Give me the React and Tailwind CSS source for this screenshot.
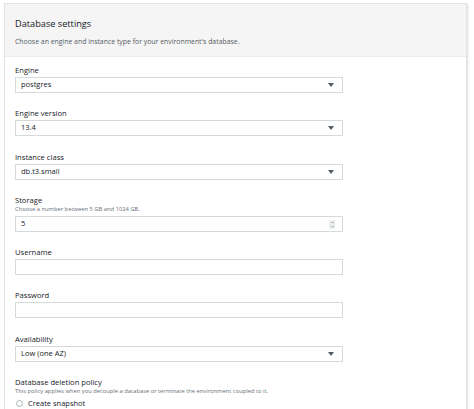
const font = { fontFamily: '"Open Sans", "Liberation Sans", sans-serif' }

const Arrow = () => (
  <svg width="6" height="4" viewBox="0 0 6 4" className="text-[#545b64]">
    <path d="M0 0 H6 L3 4 Z" fill="currentColor" />
  </svg>
)

const Label = ({ children, className = '' }) => (
  <div className={`text-[7.6px] leading-[10px] text-[#16191f] ${className}`}>{children}</div>
)

const Help = ({ children }) => (
  <div className="text-[5.8px] leading-[8px] text-[#687078]">{children}</div>
)

const Select = ({ value, className = '' }) => (
  <div
    className={`flex h-[16px] w-[328px] items-center justify-between border border-[#d5dbdb] bg-white pl-[5px] pr-[8px] text-[7.5px] text-[#16191f] ${className}`}
  >
    <span>{value}</span>
    <Arrow />
  </div>
)

const TextBox = ({ value = '', spinner = false, className = '' }) => (
  <div
    className={`flex h-[16px] w-[328px] items-center justify-between border border-[#d5dbdb] bg-white pl-[5px] pr-[7px] text-[7.5px] text-[#16191f] ${className}`}
  >
    <span>{value}</span>
    {spinner && (
      <div className="flex h-[9px] w-[6px] flex-col justify-between rounded-[1px] bg-[#eceeee] px-[1.5px] py-[2px]">
        <div className="h-[1px] bg-[#b8bcbf]" />
        <div className="h-[1px] bg-[#b8bcbf]" />
      </div>
    )}
  </div>
)

export default function App() {
  return (
    <div className="h-[409px] w-[474px] overflow-hidden bg-white pl-[4px] pt-[3px]" style={font}>
      <div className="w-[463px] border border-[#e1e4e4] bg-white shadow-[1px_1px_2px_rgba(0,0,0,0.12)]">
        {/* header */}
        <div className="h-[53px] border-b border-[#eaeded] bg-[#f5f5f5] px-[10px] pt-[13px]">
          <div className="text-[9.2px] leading-[14px] text-[#16191f]">Database settings</div>
          <div className="mt-[6px] text-[6.9px] leading-[9px] text-[#545b64]">
            Choose an engine and instance type for your environment's database.
          </div>
        </div>

        {/* fields */}
        <div className="flex flex-col px-[10px] pb-[30px] pt-[8px]">
          <Label>Engine</Label>
          <Select value="postgres" className="mt-[2px]" />

          <Label className="mt-[15px]">Engine version</Label>
          <Select value="13.4" className="mt-[2px]" />

          <Label className="mt-[16px]">Instance class</Label>
          <Select value="db.t3.small" className="mt-[2px]" />

          <Label className="mt-[16px] !leading-[9px]">Storage</Label>
          <Help>Choose a number between 5 GB and 1024 GB.</Help>
          <TextBox value="5" spinner className="mt-[3px]" />

          <Label className="mt-[15px]">Username</Label>
          <TextBox className="mt-[2px]" />

          <Label className="mt-[15px]">Password</Label>
          <TextBox className="mt-[2px]" />

          <Label className="mt-[16px]">Availability</Label>
          <Select value="Low (one AZ)" className="mt-[2px]" />

          <Label className="mt-[15px]">Database deletion policy</Label>
          <Help>This policy applies when you decouple a database or terminate the environment coupled to it.</Help>
          <div className="mt-[2px] flex items-center gap-[5px] pl-[1px]">
            <span className="h-[7px] w-[7px] rounded-full border border-[#aab7b8] bg-white" />
            <span className="text-[7.5px] leading-[12px] text-[#16191f]">Create snapshot</span>
          </div>
        </div>
      </div>
    </div>
  )
}
